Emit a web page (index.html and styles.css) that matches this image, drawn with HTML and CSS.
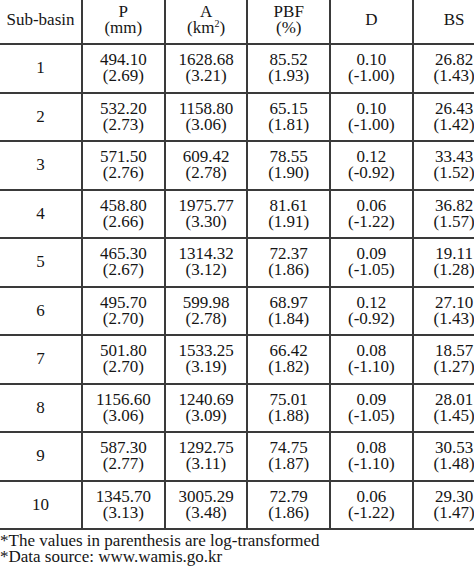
FILE: index.html
```html
<!DOCTYPE html>
<html>
<head>
<meta charset="utf-8">
<link rel="stylesheet" href="styles.css">
</head>
<body>
<div class="frame">
<table class="data">
<thead>
<tr><th class="c1">Sub-basin</th><th>P<br>(mm)</th><th>A<br>(km<sup>2</sup>)</th><th>PBF<br>(%)</th><th>D</th><th>BS</th></tr>
</thead>
<tbody>
<tr><td>1</td><td>494.10<br>(2.69)</td><td>1628.68<br>(3.21)</td><td>85.52<br>(1.93)</td><td>0.10<br>(-1.00)</td><td>26.82<br>(1.43)</td></tr>
<tr><td>2</td><td>532.20<br>(2.73)</td><td>1158.80<br>(3.06)</td><td>65.15<br>(1.81)</td><td>0.10<br>(-1.00)</td><td>26.43<br>(1.42)</td></tr>
<tr><td>3</td><td>571.50<br>(2.76)</td><td>609.42<br>(2.78)</td><td>78.55<br>(1.90)</td><td>0.12<br>(-0.92)</td><td>33.43<br>(1.52)</td></tr>
<tr><td>4</td><td>458.80<br>(2.66)</td><td>1975.77<br>(3.30)</td><td>81.61<br>(1.91)</td><td>0.06<br>(-1.22)</td><td>36.82<br>(1.57)</td></tr>
<tr><td>5</td><td>465.30<br>(2.67)</td><td>1314.32<br>(3.12)</td><td>72.37<br>(1.86)</td><td>0.09<br>(-1.05)</td><td>19.11<br>(1.28)</td></tr>
<tr><td>6</td><td>495.70<br>(2.70)</td><td>599.98<br>(2.78)</td><td>68.97<br>(1.84)</td><td>0.12<br>(-0.92)</td><td>27.10<br>(1.43)</td></tr>
<tr><td>7</td><td>501.80<br>(2.70)</td><td>1533.25<br>(3.19)</td><td>66.42<br>(1.82)</td><td>0.08<br>(-1.10)</td><td>18.57<br>(1.27)</td></tr>
<tr><td>8</td><td>1156.60<br>(3.06)</td><td>1240.69<br>(3.09)</td><td>75.01<br>(1.88)</td><td>0.09<br>(-1.05)</td><td>28.01<br>(1.45)</td></tr>
<tr><td>9</td><td>587.30<br>(2.77)</td><td>1292.75<br>(3.11)</td><td>74.75<br>(1.87)</td><td>0.08<br>(-1.10)</td><td>30.53<br>(1.48)</td></tr>
<tr><td>10</td><td>1345.70<br>(3.13)</td><td>3005.29<br>(3.48)</td><td>72.79<br>(1.86)</td><td>0.06<br>(-1.22)</td><td>29.30<br>(1.47)</td></tr>
</tbody>
</table>
<div class="notes">
<p>*The values in parenthesis are log-transformed</p>
<p>*Data source: www.wamis.go.kr</p>
</div>
</div>
</body>
</html>
```
FILE: styles.css
```css
html, body {
  margin: 0;
  padding: 0;
  background: #ffffff;
  overflow: hidden;
}
.frame {
  width: 474px;
  height: 571px;
  overflow: hidden;
  font-family: "Liberation Serif", "Times New Roman", serif;
  color: #151515;
  font-size: 17px;
}
.data {
  margin-top: -3px;
  border-collapse: separate;
  border-spacing: 0;
  table-layout: fixed;
  width: 496.5px;
}
.data th, .data td {
  box-sizing: border-box;
  width: 82.7px;
  padding: 0;
  text-align: center;
  vertical-align: middle;
  font-weight: normal;
  line-height: 16px;
  border-right: 2px solid #3a3a3a;
  border-bottom: 2px solid #3a3a3a;
}
.data th.c1 {
  width: 83px;
}
.data th {
  height: 48px;
}
.data td {
  height: 48.5px;
}
.data sup {
  font-size: 10px;
  line-height: 0;
  vertical-align: 6px;
}
.notes {
  padding-top: 2.5px;
}
.notes p {
  margin: 0;
  line-height: 16.5px;
  white-space: nowrap;
}
```
